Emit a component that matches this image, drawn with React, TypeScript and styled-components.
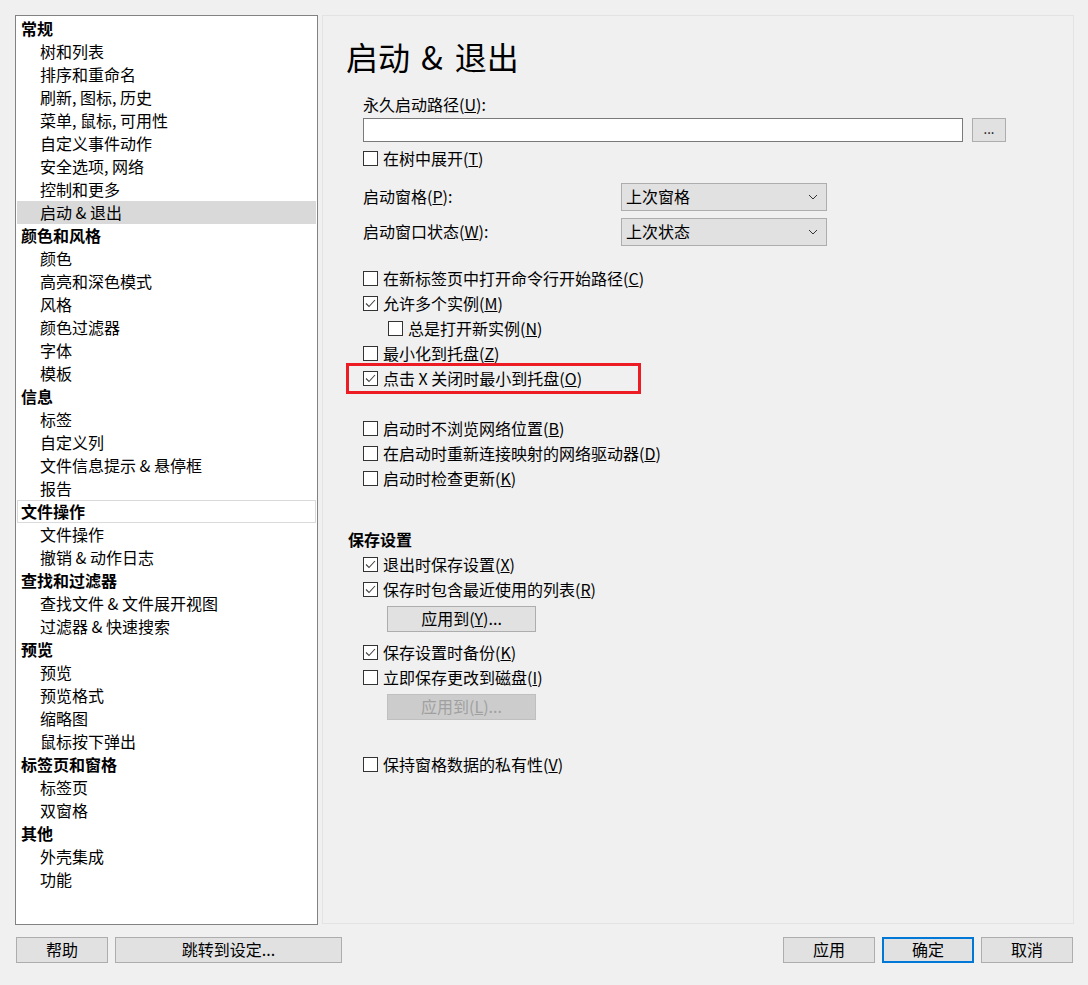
import React from "react";
import styled, { createGlobalStyle } from "styled-components";

const GlobalStyle = createGlobalStyle`
    html, body {
        margin: 0;
        padding: 0;
        background: #f0f0f0;
    }
    body {
        font-family: "Noto Sans CJK SC", "Noto Sans", sans-serif;
        font-size: 16px;
        color: #000;
    }
`;

const Window = styled.div`
    width: 1088px;
    height: 985px;
    box-sizing: border-box;
    padding: 15px 0 0 15px;
    display: flex;
    flex-direction: column;
`;

const Main = styled.div`
    display: flex;
    gap: 4px;
    height: 910px;
`;

const Tree = styled.div`
    width: 303px;
    height: 910px;
    box-sizing: border-box;
    border: 1px solid #828282;
    background: #fff;
    padding: 1px 1px 0;
    overflow: hidden;
`;

const TreeRow = styled.div<{ $category?: boolean; $selected?: boolean; $focused?: boolean }>`
    height: 23px;
    box-sizing: border-box;
    display: flex;
    align-items: center;
    padding-left: ${(p) => (p.$category ? "3px" : "22px")};
    padding-bottom: 2px;
    font-weight: ${(p) => (p.$category ? 700 : 400)};
    background: ${(p) => (p.$selected ? "#d9d9d9" : "transparent")};
    border: 1px solid ${(p) => (p.$focused ? "#dadada" : "transparent")};
    white-space: nowrap;
    line-height: 20px;
`;

const Panel = styled.div`
    width: 752px;
    height: 909px;
    box-sizing: border-box;
    border: 1px solid #e3e3e3;
    display: flex;
    flex-direction: column;
`;

const Title = styled.h1`
    margin: 20px 0 0 23px;
    font-size: 32px;
    font-weight: 400;
    line-height: 40px;
    height: 41px;
    white-space: nowrap;
`;

const Amp = styled.span`
    margin: 0 12px 0 11px;
`;

const Group = styled.div<{ $top?: number }>`
    padding-left: 40px;
    margin-top: ${(p) => p.$top ?? 0}px;
    display: flex;
    flex-direction: column;
    align-items: flex-start;
`;

const SectionHead = styled.div<{ $top?: number }>`
    margin: ${(p) => p.$top ?? 0}px 0 0 25px;
    height: 25px;
    box-sizing: border-box;
    padding-bottom: 2px;
    display: flex;
    align-items: center;
    font-weight: 700;
`;

const Label = styled.div`
    height: 24px;
    box-sizing: border-box;
    padding-bottom: 2px;
    display: flex;
    align-items: center;
    white-space: nowrap;
`;

const PathRow = styled.div`
    display: flex;
    gap: 9px;
    margin-top: 1px;
`;

const TextInput = styled.div`
    width: 600px;
    height: 24px;
    box-sizing: border-box;
    border: 1px solid #7a7a7a;
    background: #fff;
`;

const Button = styled.div<{ $w: number; $h?: number; $disabled?: boolean; $default?: boolean; $top?: number; $left?: number }>`
    width: ${(p) => p.$w}px;
    height: ${(p) => p.$h ?? 26}px;
    margin-top: ${(p) => p.$top ?? 0}px;
    margin-left: ${(p) => p.$left ?? 0}px;
    box-sizing: border-box;
    display: flex;
    align-items: center;
    justify-content: center;
    padding-bottom: 2px;
    background: ${(p) => (p.$disabled ? "#cccccc" : "#e1e1e1")};
    border: ${(p) =>
        p.$default ? "2px solid #0078d7" : p.$disabled ? "1px solid #bfbfbf" : "1px solid #adadad"};
    color: ${(p) => (p.$disabled ? "#a0a0a0" : "#000")};
    white-space: nowrap;
    line-height: 1;
`;

const SmallButton = styled(Button)`
    font-size: 13px;
    padding-bottom: 4px;
`;

const CheckRow = styled.div<{ $indent?: number; $top?: number; $marked?: boolean }>`
    position: relative;
    height: 25px;
    margin-top: ${(p) => p.$top ?? 0}px;
    padding-left: ${(p) => p.$indent ?? 0}px;
    display: flex;
    align-items: center;
    gap: 5px;
    white-space: nowrap;

    ${(p) =>
        p.$marked &&
        `
        &::after {
            content: "";
            position: absolute;
            left: -17px;
            top: -3px;
            width: 295px;
            height: 31px;
            box-sizing: border-box;
            border: 3px solid #ed1c24;
        }
    `}
`;

const CheckText = styled.span`
    margin-top: -2px;
`;

const Box = styled.span`
    width: 15px;
    height: 15px;
    box-sizing: border-box;
    border: 1px solid #333;
    background: #fff;
    display: flex;
    align-items: center;
    justify-content: center;
    flex: none;
`;

const SelectRow = styled.div<{ $top?: number }>`
    display: flex;
    align-items: center;
    margin-top: ${(p) => p.$top ?? 0}px;
`;

const SelectLabel = styled.div`
    width: 258px;
    white-space: nowrap;
    margin-top: -2px;
`;

const Select = styled.div`
    width: 206px;
    height: 28px;
    box-sizing: border-box;
    border: 1px solid #adadad;
    background: #e1e1e1;
    display: flex;
    align-items: center;
    justify-content: space-between;
    padding: 0 8px 2px 4px;
`;

const Footer = styled.div`
    margin-top: 12px;
    display: flex;
    justify-content: space-between;
    padding: 0 15px 0 1px;
`;

const ButtonGroup = styled.div`
    display: flex;
    gap: 7px;
`;

const Check = ({ checked }: { checked?: boolean }) => (
    <Box>
        {checked && (
            <svg width="11" height="9" viewBox="0 0 11 9">
                <polyline points="1,4.5 4,7.5 10,1" fill="none" stroke="#444" strokeWidth="1.1" />
            </svg>
        )}
    </Box>
);

const Chevron = () => (
    <svg width="10" height="6" viewBox="0 0 10 6" style={{ marginTop: 2 }}>
        <polyline points="1,1 5,5 9,1" fill="none" stroke="#333" strokeWidth="1" />
    </svg>
);

const Key = ({ k }: { k: string }) => (
    <>
        (<u>{k}</u>)
    </>
);

interface Option {
    text: string;
    k: string;
    checked?: boolean;
    indent?: number;
    top?: number;
    marked?: boolean;
}

const Option = ({ text, k, checked, indent, top, marked }: Option) => (
    <CheckRow $indent={indent} $top={top} $marked={marked}>
        <Check checked={checked} />
        <CheckText>
            {text}
            <Key k={k} />
        </CheckText>
    </CheckRow>
);

const TREE: [string, boolean?][] = [
    ["常规", true],
    ["树和列表"],
    ["排序和重命名"],
    ["刷新, 图标, 历史"],
    ["菜单, 鼠标, 可用性"],
    ["自定义事件动作"],
    ["安全选项, 网络"],
    ["控制和更多"],
    ["启动 & 退出"],
    ["颜色和风格", true],
    ["颜色"],
    ["高亮和深色模式"],
    ["风格"],
    ["颜色过滤器"],
    ["字体"],
    ["模板"],
    ["信息", true],
    ["标签"],
    ["自定义列"],
    ["文件信息提示 & 悬停框"],
    ["报告"],
    ["文件操作", true],
    ["文件操作"],
    ["撤销 & 动作日志"],
    ["查找和过滤器", true],
    ["查找文件 & 文件展开视图"],
    ["过滤器 & 快速搜索"],
    ["预览", true],
    ["预览"],
    ["预览格式"],
    ["缩略图"],
    ["鼠标按下弹出"],
    ["标签页和窗格", true],
    ["标签页"],
    ["双窗格"],
    ["其他", true],
    ["外壳集成"],
    ["功能"],
];

const STARTUP: Option[] = [
    { text: "在新标签页中打开命令行开始路径", k: "C" },
    { text: "允许多个实例", k: "M", checked: true },
    { text: "总是打开新实例", k: "N", indent: 25 },
    { text: "最小化到托盘", k: "Z" },
    { text: "点击 X 关闭时最小到托盘", k: "O", checked: true, marked: true },
];

const NETWORK: Option[] = [
    { text: "启动时不浏览网络位置", k: "B" },
    { text: "在启动时重新连接映射的网络驱动器", k: "D" },
    { text: "启动时检查更新", k: "K" },
];

export default function App() {
    return (
        <>
            <GlobalStyle />
            <Window>
                <Main>
                    <Tree>
                        {TREE.map(([name, cat], i) => (
                            <TreeRow key={i} $category={cat} $selected={i === 8} $focused={i === 21}>
                                {name}
                            </TreeRow>
                        ))}
                    </Tree>
                    <Panel>
                        <Title>
                            启动<Amp>&amp;</Amp>退出
                        </Title>
                        <Group $top={16}>
                            <Label>
                                永久启动路径<Key k="U" />:
                            </Label>
                            <PathRow>
                                <TextInput />
                                <SmallButton $w={34} $h={24}>...</SmallButton>
                            </PathRow>
                            <Option text="在树中展开" k="T" top={4} />
                            <SelectRow $top={12}>
                                <SelectLabel>
                                    启动窗格<Key k="P" />:
                                </SelectLabel>
                                <Select>
                                    上次窗格
                                    <Chevron />
                                </Select>
                            </SelectRow>
                            <SelectRow $top={7}>
                                <SelectLabel>
                                    启动窗口状态<Key k="W" />:
                                </SelectLabel>
                                <Select>
                                    上次状态
                                    <Chevron />
                                </Select>
                            </SelectRow>
                        </Group>
                        <Group $top={20}>
                            {STARTUP.map((o) => (
                                <Option key={o.k} {...o} />
                            ))}
                        </Group>
                        <Group $top={25}>
                            {NETWORK.map((o) => (
                                <Option key={o.k} {...o} />
                            ))}
                        </Group>
                        <SectionHead $top={36}>保存设置</SectionHead>
                        <Group>
                            <Option text="退出时保存设置" k="X" checked />
                            <Option text="保存时包含最近使用的列表" k="R" checked />
                            <Button $w={149} $top={4} $left={24}>
                                应用到<Key k="Y" />...
                            </Button>
                            <Option text="保存设置时备份" k="K" checked top={8} />
                            <Option text="立即保存更改到磁盘" k="I" />
                            <Button $w={149} $top={4} $left={24} $disabled>
                                应用到<Key k="L" />...
                            </Button>
                            <Option text="保持窗格数据的私有性" k="V" top={32} />
                        </Group>
                    </Panel>
                </Main>
                <Footer>
                    <ButtonGroup>
                        <Button $w={92}>帮助</Button>
                        <Button $w={227}>跳转到设定...</Button>
                    </ButtonGroup>
                    <ButtonGroup>
                        <Button $w={92}>应用</Button>
                        <Button $w={92} $default>
                            确定
                        </Button>
                        <Button $w={92}>取消</Button>
                    </ButtonGroup>
                </Footer>
            </Window>
        </>
    );
}
